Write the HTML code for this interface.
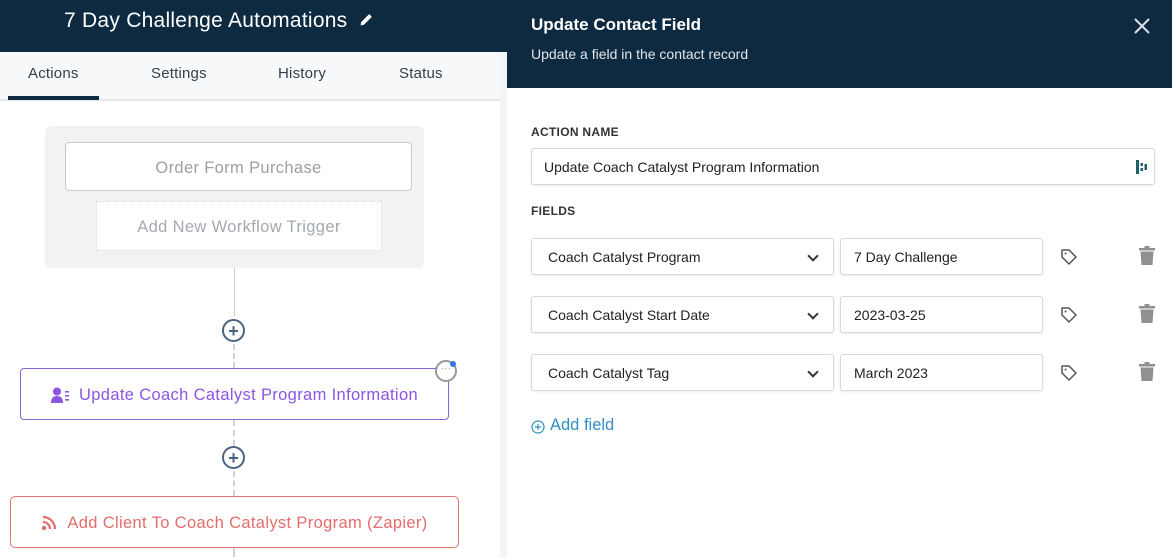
<!DOCTYPE html>
<html><head><meta charset="utf-8"><style>
*{box-sizing:border-box;margin:0;padding:0}
body{width:1172px;height:557px;overflow:hidden;font-family:"Liberation Sans",sans-serif;background:#fff;position:relative}
.abs{position:absolute}
.hdrL{left:0;top:0;width:507px;height:52px;background:#0e2a40}
.tabs{left:0;top:52px;width:507px;height:49px;background:#f7f8f9;border-bottom:2px solid #e6e8eb}
.tab{position:absolute;top:13px;font-size:15px;color:#33404d;letter-spacing:.2px}
.strip{left:500px;top:52px;width:7px;height:505px;background:#f3f4f5}
.trig{left:45px;top:126px;width:379px;height:142px;background:#f1f2f4;border-radius:6px}
.box{position:absolute;display:flex;align-items:center;justify-content:center;font-size:16.5px;letter-spacing:.35px;background:#fff}
.plus{position:absolute;width:23px;height:23px;border:2px solid #4b6282;border-radius:50%;color:#4b6282;font-size:18px;font-weight:bold;display:flex;align-items:center;justify-content:center;line-height:1;background:#fff}
.dash{position:absolute;left:233px;width:0;border-left:2px dashed #cfd3d8}
.hdrR{left:507px;top:0;width:665px;height:88px;background:#0e2a40;color:#fff}
.lbl{font-size:12px;font-weight:bold;color:#333;letter-spacing:.3px}
.inp{position:absolute;height:37px;border:1px solid #d6d8db;border-radius:3px;background:#fff;font-size:14px;color:#222;display:flex;align-items:center;padding-left:16px;box-shadow:0 1px 2px rgba(0,0,0,.08)}
.chev{position:absolute;right:16px;top:13px;width:8px;height:8px;border-right:2px solid #333;border-bottom:2px solid #333;transform:rotate(45deg)}
</style></head><body>
<div class="abs hdrL"><div class="abs" style="left:64px;top:9px;color:#fff;font-size:21px;letter-spacing:.25px">7 Day Challenge Automations</div>
<svg class="abs" style="left:359px;top:12px" width="15" height="15" viewBox="0 0 14 14"><path d="M1.5 12.5 L2 9.5 L9.5 2 L12 4.5 L4.5 12 Z" fill="#fff"/></svg></div>
<div class="abs tabs">
<div class="tab" style="left:28px">Actions</div>
<div class="tab" style="left:151px">Settings</div>
<div class="tab" style="left:278px">History</div>
<div class="tab" style="left:399px">Status</div>
<div class="abs" style="left:8px;top:44px;width:91px;height:4px;background:#0e2a40"></div>
</div>
<div class="abs strip"></div>
<div class="abs trig">
<div class="box" style="left:20px;top:16px;width:347px;height:49px;border:1px solid #c6c9cd;border-radius:4px;color:#9aa0a7;padding-top:3px">Order Form Purchase</div>
<div class="box" style="left:51px;top:75px;width:286px;height:50px;border:1px dotted #d6d8db;color:#a4a9af;padding-top:3px">Add New Workflow Trigger</div>
</div>
<div class="abs" style="left:234px;top:268px;width:1px;height:48px;background:#c9ccd0"></div>
<div class="plus" style="left:222px;top:319px">+</div>
<div class="dash" style="top:344px;height:24px"></div>
<div class="box" style="left:20px;top:368px;width:429px;height:52px;border:1px solid #8a63d2;border-radius:4px;color:#8a56e2;padding-top:2px">
<svg width="22" height="16" viewBox="0 0 22 16" style="margin-right:6px"><circle cx="6" cy="4.5" r="4" fill="#8a56e2"/><path d="M0 16 Q0 9 6 9 Q12 9 12 16Z" fill="#8a56e2"/><rect x="14" y="4" width="4" height="1.6" fill="#8a56e2"/><rect x="14" y="8" width="4" height="1.6" fill="#8a56e2"/><rect x="14" y="12" width="4" height="1.6" fill="#8a56e2"/></svg>Update Coach Catalyst Program Information</div>
<div class="abs" style="left:435px;top:360px;width:22px;height:22px;border:2px solid #999;border-radius:50%;background:#fff;color:#999;font-size:10px;text-align:center;line-height:14px">···</div>
<div class="abs" style="left:450px;top:361px;width:6px;height:6px;border-radius:50%;background:#2f7be5"></div>
<div class="dash" style="top:420px;height:26px"></div>
<div class="plus" style="left:222px;top:446px">+</div>
<div class="dash" style="top:471px;height:25px"></div>
<div class="box" style="left:10px;top:496px;width:449px;height:52px;border:1px solid #e37474;border-radius:5px;color:#e36d6d;padding-top:2px">
<svg width="16" height="16" viewBox="0 0 16 16" style="margin-right:10px"><circle cx="3" cy="13" r="2.2" fill="#e36d6d"/><path d="M2 7 A7 7 0 0 1 9 14" stroke="#e36d6d" stroke-width="2.2" fill="none"/><path d="M2 2 A12 12 0 0 1 14 14" stroke="#e36d6d" stroke-width="2.2" fill="none"/></svg>Add Client To Coach Catalyst Program (Zapier)</div>
<div class="dash" style="top:548px;height:9px"></div>

<div class="abs hdrR">
<div class="abs" style="left:24px;top:15px;font-size:17px;font-weight:bold">Update Contact Field</div>
<div class="abs" style="left:24px;top:46px;font-size:14px;color:#e0e6ec">Update a field in the contact record</div>
<svg class="abs" style="left:627px;top:18px" width="16" height="16" viewBox="0 0 16 16"><path d="M1 1L15 15M15 1L1 15" stroke="#dfe6ee" stroke-width="2"/></svg>
</div>
<div class="abs lbl" style="left:531px;top:125px">ACTION NAME</div>
<div class="inp" style="left:531px;top:148px;width:624px;padding-left:12px">Update Coach Catalyst Program Information
<svg class="abs" style="right:6px;top:11px" width="12" height="14" viewBox="0 0 12 14"><rect x="0" y="0" width="3" height="14" fill="#1f5f6b"/><rect x="4.5" y="3" width="2.5" height="3" fill="#1f5f6b"/><rect x="4.5" y="8" width="2.5" height="3" fill="#1f5f6b"/><rect x="8.5" y="4" width="2.5" height="6" fill="#1f5f6b"/></svg></div>
<div class="abs lbl" style="left:531px;top:204px">FIELDS</div>

<div class="inp" style="left:531px;top:238px;width:303px">Coach Catalyst Program<div class="chev"></div></div>
<div class="inp" style="left:840px;top:238px;width:203px;padding-left:13px">7 Day Challenge</div>
<div class="inp" style="left:531px;top:296px;width:303px">Coach Catalyst Start Date<div class="chev"></div></div>
<div class="inp" style="left:840px;top:296px;width:203px;padding-left:13px">2023-03-25</div>
<div class="inp" style="left:531px;top:354px;width:303px">Coach Catalyst Tag<div class="chev"></div></div>
<div class="inp" style="left:840px;top:354px;width:203px;padding-left:13px">March 2023</div>

<svg class="abs" style="left:1060px;top:248px" width="18" height="18" viewBox="0 0 18 18"><path d="M2 2 H9 L16 9 L9 16 L2 9 Z" fill="none" stroke="#555" stroke-width="1.5" stroke-linejoin="round"/><circle cx="5.5" cy="5.5" r="1" fill="#555"/></svg>
<svg class="abs" style="left:1060px;top:306px" width="18" height="18" viewBox="0 0 18 18"><path d="M2 2 H9 L16 9 L9 16 L2 9 Z" fill="none" stroke="#555" stroke-width="1.5" stroke-linejoin="round"/><circle cx="5.5" cy="5.5" r="1" fill="#555"/></svg>
<svg class="abs" style="left:1060px;top:364px" width="18" height="18" viewBox="0 0 18 18"><path d="M2 2 H9 L16 9 L9 16 L2 9 Z" fill="none" stroke="#555" stroke-width="1.5" stroke-linejoin="round"/><circle cx="5.5" cy="5.5" r="1" fill="#555"/></svg>

<svg class="abs" style="left:1139px;top:246px" width="16" height="19" viewBox="0 0 16 19"><rect x="0" y="2" width="16" height="2.5" fill="#909090"/><rect x="5.5" y="0" width="5" height="2" fill="#909090"/><path d="M1.5 5.5 H14.5 L13.5 19 H2.5 Z" fill="#909090"/></svg>
<svg class="abs" style="left:1139px;top:304px" width="16" height="19" viewBox="0 0 16 19"><rect x="0" y="2" width="16" height="2.5" fill="#909090"/><rect x="5.5" y="0" width="5" height="2" fill="#909090"/><path d="M1.5 5.5 H14.5 L13.5 19 H2.5 Z" fill="#909090"/></svg>
<svg class="abs" style="left:1139px;top:362px" width="16" height="19" viewBox="0 0 16 19"><rect x="0" y="2" width="16" height="2.5" fill="#909090"/><rect x="5.5" y="0" width="5" height="2" fill="#909090"/><path d="M1.5 5.5 H14.5 L13.5 19 H2.5 Z" fill="#909090"/></svg>

<div class="abs" style="left:531px;top:416px;color:#2e8fc0;font-size:16.5px;display:flex;align-items:center">
<svg width="14" height="14" viewBox="0 0 14 14" style="margin-right:5px;margin-top:3px"><circle cx="7" cy="7" r="6" fill="none" stroke="#2e8fc0" stroke-width="1.2"/><path d="M7 4V10M4 7H10" stroke="#2e8fc0" stroke-width="1.2"/></svg>Add field</div>
</body></html>
